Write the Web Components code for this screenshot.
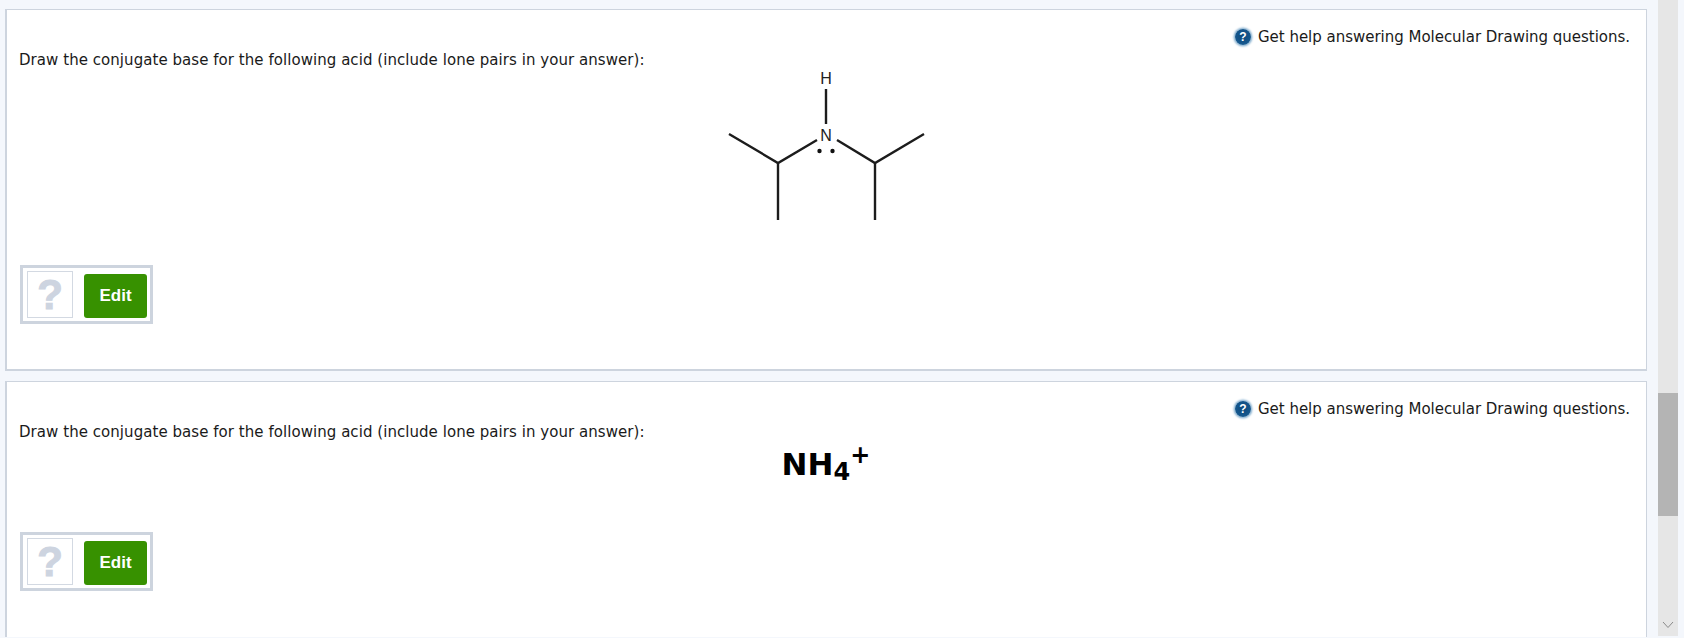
<!DOCTYPE html>
<html>
<head>
<meta charset="utf-8">
<title>Molecular Drawing</title>
<style>
html, body { margin: 0; height: 638px; overflow: hidden; background: #f4f7fc; }
body { display: flex; font-family: "DejaVu Sans", Verdana, sans-serif; color: #1a1a1a; }
</style>
</head>
<body>
<question-list>
    <question-card style="--card-height: 362px; --widget-gap: 39px">
        <span slot="prompt">Draw the conjugate base for the following acid (include lone pairs in your answer):</span>
        <amine-drawing slot="molecule"></amine-drawing>
    </question-card>
    <question-card style="--card-height: 256px; --card-bottom: 0; --widget-gap: 48px">
        <span slot="prompt">Draw the conjugate base for the following acid (include lone pairs in your answer):</span>
        <ammonium-formula slot="molecule"></ammonium-formula>
    </question-card>
</question-list>
<page-scrollbar></page-scrollbar>

<script>
class QuestionList extends HTMLElement {
    constructor() {
        super();
        this.attachShadow({ mode: 'open' });
        this.shadowRoot.innerHTML = `
<style>
:host {
    display: flex;
    flex-direction: column;
    gap: 10px;
    width: 1642px;
    margin: 9px 0 0 5px;
}
</style>
<slot></slot>`;
    }
}

class QuestionCard extends HTMLElement {
    constructor() {
        super();
        this.attachShadow({ mode: 'open' });
        this.shadowRoot.innerHTML = `
<style>
:host {
    display: block;
    box-sizing: border-box;
    height: var(--card-height);
    background: #fff;
    border: solid #cdd4de;
    border-width: 1px 1px var(--card-bottom, 2px) 2px;
    padding: 18px 16px 0 13px;
    font-size: 15px;
    letter-spacing: .05px;
}
.help { display: flex; justify-content: flex-end; letter-spacing: -.02px; }
.prompt { line-height: 18px; margin: 5px 0 0 -1px; }
.molecule { display: flex; justify-content: center; margin-right: -2px; }
edit-box { margin-top: var(--widget-gap, 40px); }
</style>
<div class="help"><help-link></help-link></div>
<div class="prompt"><slot name="prompt"></slot></div>
<div class="molecule"><slot name="molecule"></slot></div>
<edit-box></edit-box>`;
    }
}

class HelpLink extends HTMLElement {
    constructor() {
        super();
        this.attachShadow({ mode: 'open' });
        this.shadowRoot.innerHTML = `
<style>
:host { display: flex; align-items: center; gap: 7px; height: 18px; }
.icon {
    width: 16px;
    height: 16px;
    border-radius: 50%;
    background: radial-gradient(circle at 50% 45%, #0f4a7c 0, #14568c 60%, #2f74aa 100%);
    box-shadow: 0 0 2px 1.5px #8fb6d3;
    color: #fff;
    font: bold 12px/16px "Liberation Sans", Arial, sans-serif;
    text-align: center;
}
</style>
<span class="icon">?</span><span>Get help answering Molecular Drawing questions.</span>`;
    }
}

class EditBox extends HTMLElement {
    constructor() {
        super();
        this.attachShadow({ mode: 'open' });
        this.shadowRoot.innerHTML = `
<style>
:host {
    display: flex;
    align-items: center;
    gap: 10px;
    box-sizing: border-box;
    width: 133px;
    height: 59px;
    border: 3px solid #cdd4de;
    padding: 0 3px 0 4px;
    background: #fff;
}
.preview {
    flex: none;
    box-sizing: border-box;
    width: 46px;
    height: 47px;
    margin-right: 1px;
    border: 1px solid #d3d9e2;
    color: #cdd4e0;
    font: bold 42px/45px "Liberation Sans", Arial, sans-serif;
    -webkit-text-stroke: 1px #cdd4e0;
    text-align: center;
}
button {
    flex: none;
    width: 63px;
    height: 44px;
    margin-top: 2px;
    border: 0;
    border-radius: 3px;
    background: #379100;
    color: #fff;
    font: bold 17px "Liberation Sans", Arial, sans-serif;
    padding: 0;
}
</style>
<div class="preview">?</div>
<button>Edit</button>`;
    }
}

class AmineDrawing extends HTMLElement {
    constructor() {
        super();
        this.attachShadow({ mode: 'open' });
        // coordinates are relative to the drawing box, it sits centred under the prompt
        this.shadowRoot.innerHTML = `
<style>
:host { display: block; width: 252px; height: 156px; margin-top: 1px; }
svg { display: block; }
text { font: 16px "Liberation Sans", Arial, sans-serif; fill: #222; text-anchor: middle; }
</style>
<svg width="252" height="156" viewBox="0 0 252 156">
    <g fill="none" stroke="#1c1c1c" stroke-width="2.4">
        <path d="M29 64 L78 93 L117 70"/>
        <path d="M78 93 V150"/>
        <path d="M137 70 L175 93 L224 64"/>
        <path d="M175 93 V150"/>
        <path d="M126 19 V54"/>
    </g>
    <text x="126" y="14">H</text>
    <text x="126" y="71">N</text>
    <circle cx="119.500" cy="81" r="2.2" fill="#111"/>
    <circle cx="132.500" cy="81" r="2.2" fill="#111"/>
</svg>`;
    }
}

class AmmoniumFormula extends HTMLElement {
    constructor() {
        super();
        this.attachShadow({ mode: 'open' });
        this.shadowRoot.innerHTML = `
<style>
:host {
    display: block;
    margin-top: 3px;
    color: #000;
    font: bold 31px/40px "DejaVu Sans", Verdana, sans-serif;
    white-space: nowrap;
}
sub, sup { font-size: 24px; line-height: 0; }
sub { vertical-align: -5px; }
sup { vertical-align: 12px; }
</style>
NH<sub>4</sub><sup>+</sup>`;
    }
}

class PageScrollbar extends HTMLElement {
    constructor() {
        super();
        this.attachShadow({ mode: 'open' });
        this.shadowRoot.innerHTML = `
<style>
:host {
    display: flex;
    flex-direction: column;
    width: 20px;
    height: 636px;
    margin-left: 11px;
    background: #e6e6e6;
}
.before { height: 393px; }
.thumb { height: 123px; background: #b4b4b4; }
.after { flex: 1; display: flex; justify-content: center; align-items: flex-end; padding-bottom: 7px; }
svg { display: block; }
</style>
<div class="before"></div>
<div class="thumb"></div>
<div class="after">
    <svg width="12" height="8" viewBox="0 0 12 8"><path d="M1 1 L6 6.5 L11 1" fill="none" stroke="#8a8a8a" stroke-width="1"/></svg>
</div>`;
    }
}

customElements.define('question-list', QuestionList);
customElements.define('question-card', QuestionCard);
customElements.define('help-link', HelpLink);
customElements.define('edit-box', EditBox);
customElements.define('amine-drawing', AmineDrawing);
customElements.define('ammonium-formula', AmmoniumFormula);
customElements.define('page-scrollbar', PageScrollbar);
</script>
</body>
</html>
